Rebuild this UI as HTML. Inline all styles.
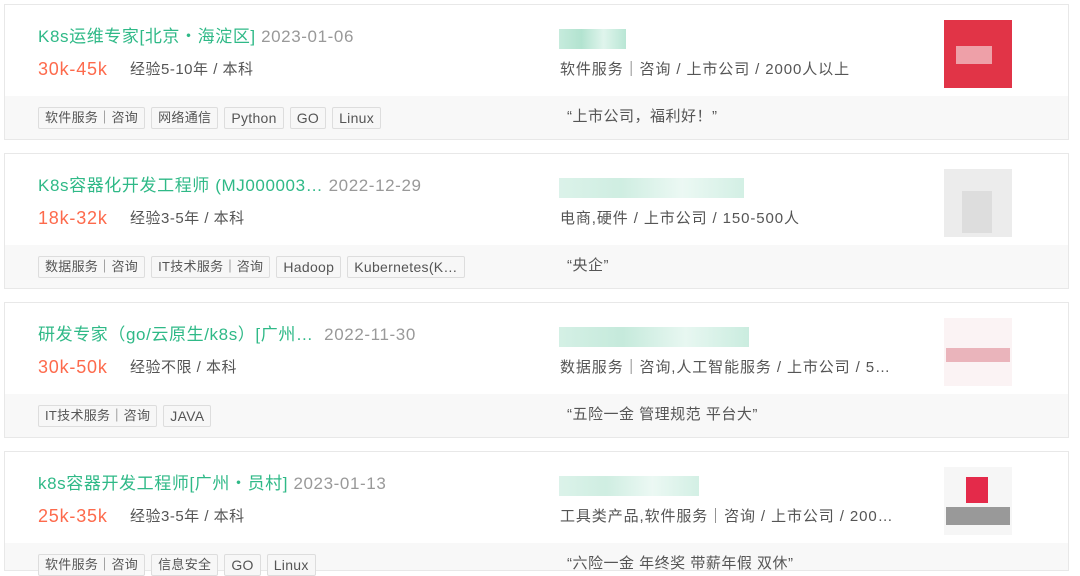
<!DOCTYPE html><html><head><meta charset="utf-8"><style>
body{margin:0;width:1080px;height:561px;overflow:hidden;background:#fff;font-family:"Liberation Sans","Noto Sans CJK SC",sans-serif;position:relative}
.card{position:absolute;left:4px;width:1065px;height:136px;border:1px solid #e8e8e8;box-sizing:border-box;background:#fff}
.bot{position:absolute;left:0;right:0;top:91px;bottom:0;background:#f8f8f8}
.t{position:absolute;left:33px;top:21px;font-size:17px;letter-spacing:0.6px;color:#2fb987;white-space:nowrap;line-height:22px}
.t span{color:#999}
.s{position:absolute;left:33px;top:53px;font-size:18px;letter-spacing:0.8px;color:#fd6a4c;line-height:22px}
.e{position:absolute;left:125px;top:54px;font-size:15px;letter-spacing:0.5px;color:#555;white-space:nowrap;line-height:22px}
.tags{position:absolute;left:33px;top:11px;display:flex;gap:6px}
.tag{border:1px solid #ddd;border-radius:2px;background:#f7f7f7;font-size:13px;letter-spacing:0.3px;color:#555;padding:2px 6px;height:16px;line-height:16px;white-space:nowrap}
.tag.l{font-size:14px}
.cn{position:absolute;left:554px;top:24px;height:20px;background:linear-gradient(90deg,#b8e6d4,#9fdcc4,#d8f2e8,#a7e0ca);opacity:.8}
.ci{position:absolute;left:555px;top:54px;font-size:15px;letter-spacing:0.9px;color:#555;white-space:nowrap;line-height:22px}
.q{position:absolute;left:562px;top:9px;font-size:15px;letter-spacing:0.5px;color:#555}
.logo{position:absolute;left:939px;top:15px;width:68px;height:68px}
</style></head><body>

<div class="card" style="top:4px">
<div class="t">K8s运维专家[北京・海淀区] <span>2023-01-06</span></div>
<div class="s">30k-45k</div><div class="e">经验5-10年 / 本科</div>
<div class="cn" style="width:67px"></div>
<div class="ci">软件服务｜咨询 / 上市公司 / 2000人以上</div>
<div class="logo" style="background:#e13447"><div style="position:absolute;left:12px;top:26px;width:36px;height:18px;background:#eea0a8"></div></div>
<div class="bot"><div class="tags"><div class="tag">软件服务｜咨询</div><div class="tag">网络通信</div><div class="tag l">Python</div><div class="tag l">GO</div><div class="tag l">Linux</div></div>
<div class="q">“上市公司，福利好！”</div></div>
</div>

<div class="card" style="top:153px">
<div class="t">K8s容器化开发工程师 (MJ000003… <span>2022-12-29</span></div>
<div class="s">18k-32k</div><div class="e">经验3-5年 / 本科</div>
<div class="cn" style="width:185px;opacity:.5"></div>
<div class="ci">电商,硬件 / 上市公司 / 150-500人</div>
<div class="logo" style="background:#ececec"><div style="position:absolute;left:18px;top:22px;width:30px;height:42px;background:#ddd"></div></div>
<div class="bot"><div class="tags"><div class="tag">数据服务｜咨询</div><div class="tag">IT技术服务｜咨询</div><div class="tag l">Hadoop</div><div class="tag l">Kubernetes(K…</div></div>
<div class="q">“央企”</div></div>
</div>

<div class="card" style="top:302px">
<div class="t">研发专家（go/云原生/k8s）[广州… <span>&nbsp;2022-11-30</span></div>
<div class="s">30k-50k</div><div class="e">经验不限 / 本科</div>
<div class="cn" style="width:190px;opacity:.6"></div>
<div class="ci">数据服务｜咨询,人工智能服务 / 上市公司 / 5…</div>
<div class="logo" style="background:#fbf3f4"><div style="position:absolute;left:2px;top:30px;width:64px;height:14px;background:#eab4bb"></div></div>
<div class="bot"><div class="tags"><div class="tag">IT技术服务｜咨询</div><div class="tag l">JAVA</div></div>
<div class="q">“五险一金 管理规范 平台大”</div></div>
</div>

<div class="card" style="top:451px;height:120px">
<div class="t">k8s容器开发工程师[广州・员村] <span>2023-01-13</span></div>
<div class="s">25k-35k</div><div class="e">经验3-5年 / 本科</div>
<div class="cn" style="width:140px;opacity:.5"></div>
<div class="ci">工具类产品,软件服务｜咨询 / 上市公司 / 200…</div>
<div class="logo" style="background:#f6f6f6"><div style="position:absolute;left:22px;top:10px;width:22px;height:26px;background:#e42a4a"></div><div style="position:absolute;left:2px;top:40px;width:64px;height:18px;background:#999"></div></div>
<div class="bot"><div class="tags"><div class="tag">软件服务｜咨询</div><div class="tag">信息安全</div><div class="tag l">GO</div><div class="tag l">Linux</div></div>
<div class="q">“六险一金 年终奖 带薪年假 双休”</div></div>
</div>

</body></html>
